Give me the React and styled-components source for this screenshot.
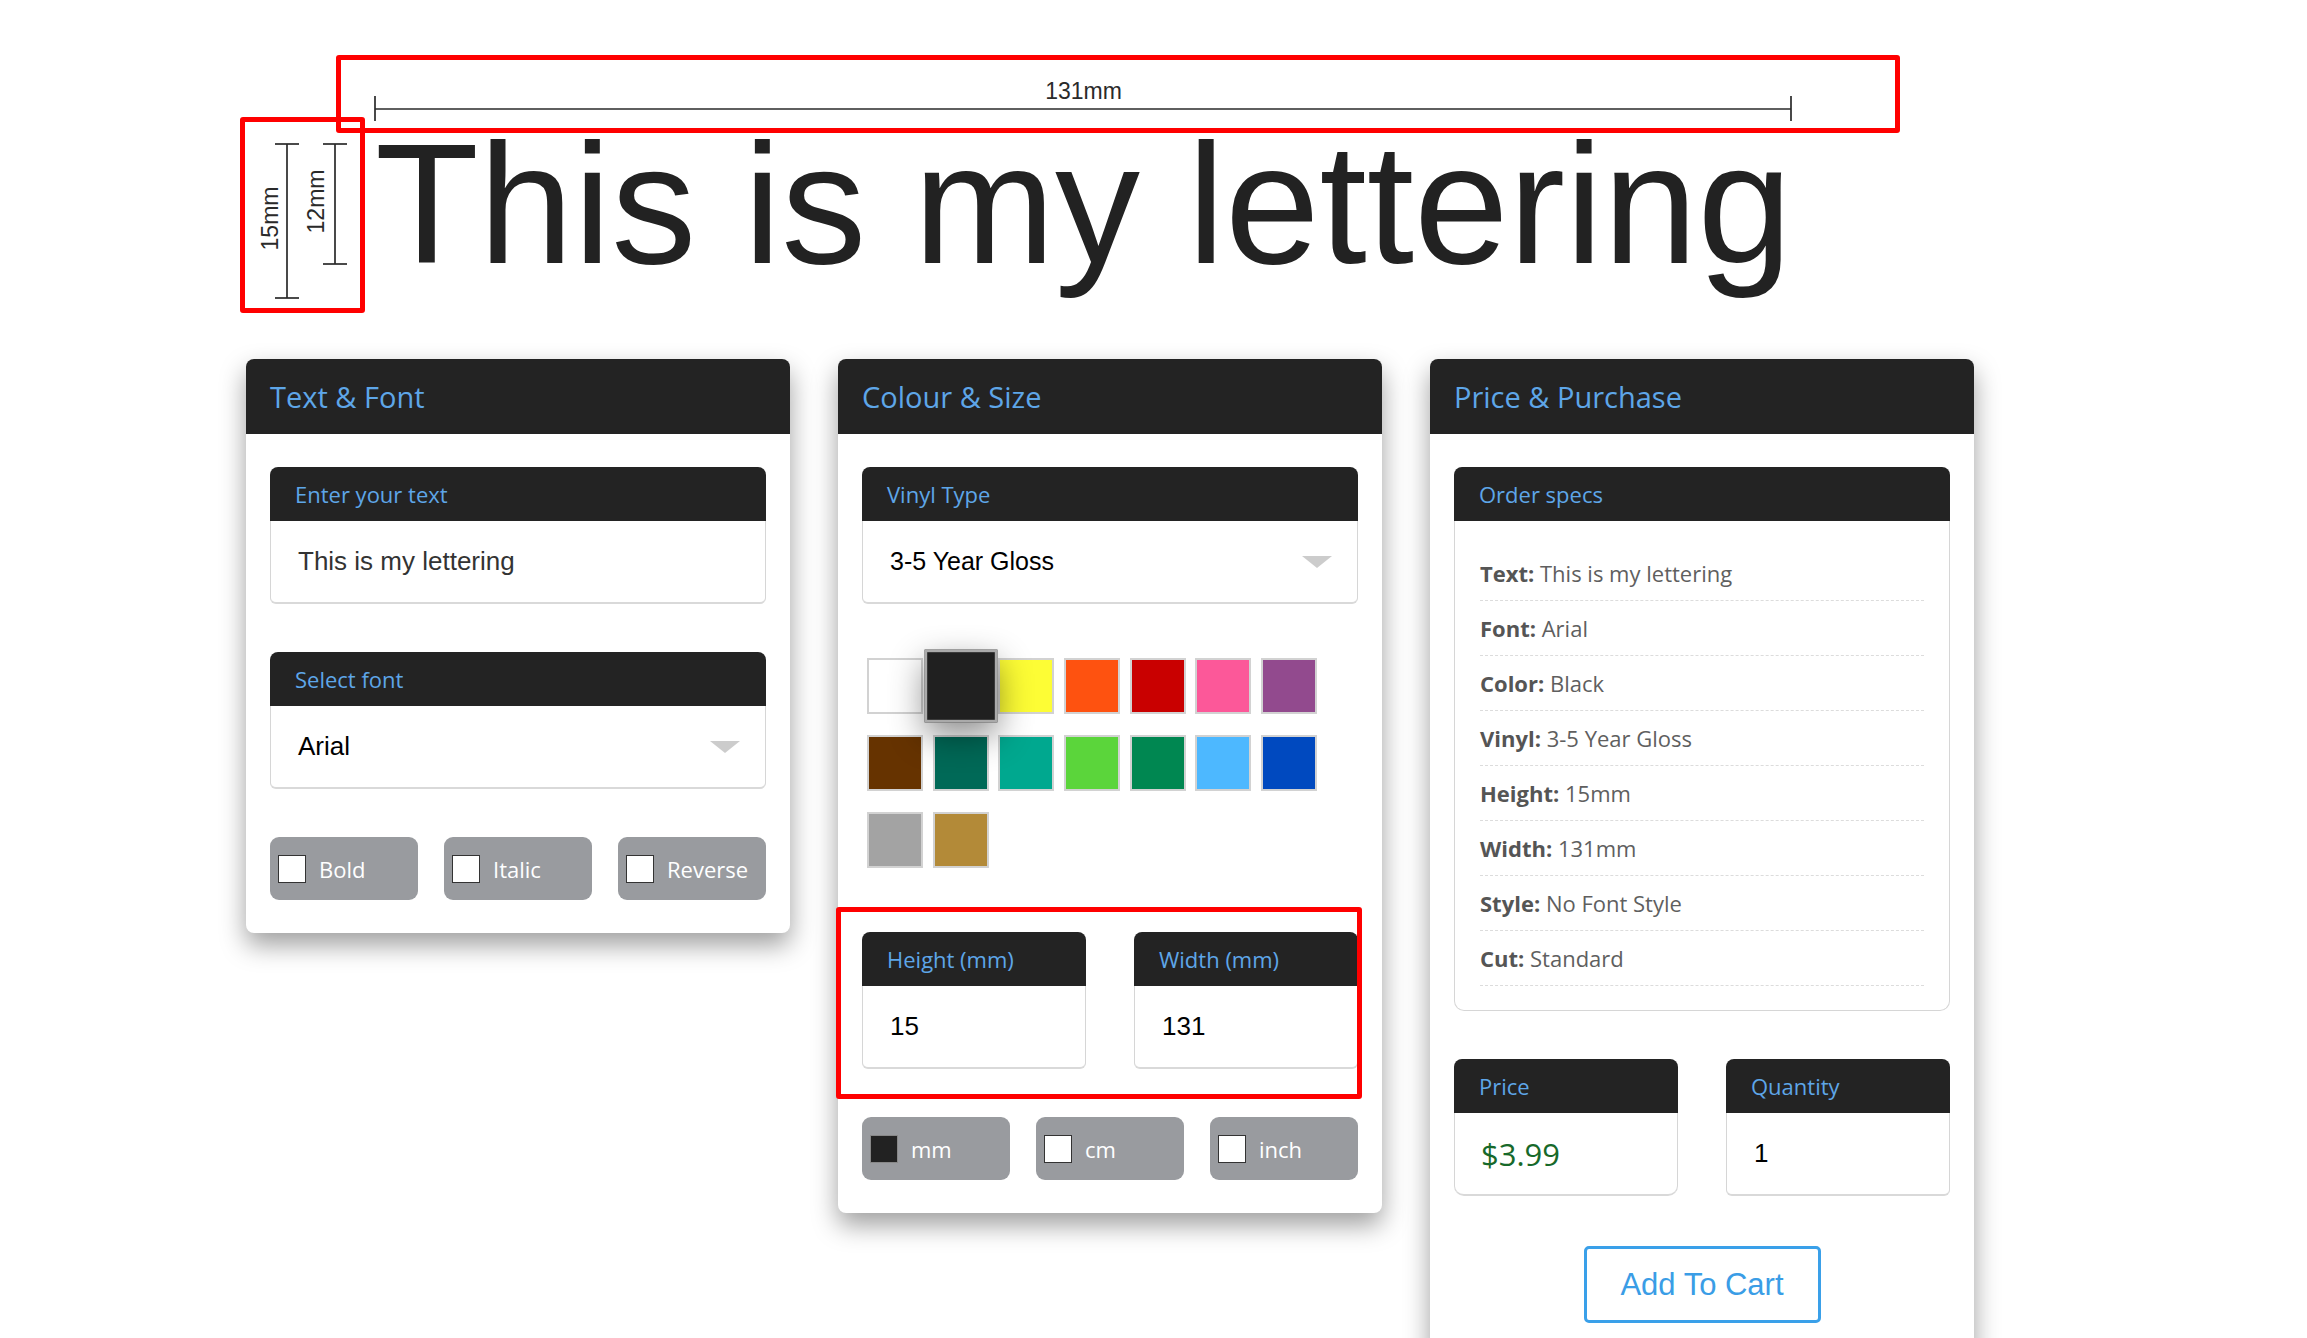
import React from "react";
import styled, { createGlobalStyle } from "styled-components";

const GlobalStyle = createGlobalStyle`
  html, body { margin: 0; padding: 0; background: #fff; }
  body { font-family: "Open Sans", "Liberation Sans", sans-serif; }
  * { box-sizing: border-box; }
`;

const BLUE = "#5ea6e8";
const DARK = "#232323";

const Page = styled.main`
  width: 100%;
  min-height: 1338px;
  background: #fff;
`;

const Preview = styled.section`
  position: relative;
  height: 359px;
  display: flex;
  align-items: flex-start;
  padding: 70px 0 0 254px;
`;

const HeightRulers = styled.svg`
  flex: none;
  display: block;
  margin-top: 49px;
  width: 120px;
  height: 180px;
  overflow: visible;
`;

const PreviewMain = styled.div`
  display: flex;
  flex-direction: column;
`;

const WidthRuler = styled.svg`
  display: block;
  width: 1420px;
  height: 49px;
  overflow: visible;
`;

const Lettering = styled.div`
  margin-left: 1px;
  font-family: "Liberation Sans", Arial, sans-serif;
  font-size: 170px;
  line-height: 170px;
  height: 170px;
  color: #222;
  white-space: nowrap;
`;

const Annotation = styled.div`
  position: absolute;
  left: ${(p) => p.$left}px;
  top: ${(p) => p.$top}px;
  width: ${(p) => p.$w}px;
  height: ${(p) => p.$h}px;
  border: 5px solid #ff0000;
  border-radius: 3px;
  pointer-events: none;
`;

const PanelRow = styled.div`
  display: flex;
  align-items: flex-start;
  gap: 48px;
  padding-left: 246px;
`;

const Panel = styled.section`
  flex: none;
  width: 544px;
  background: #fff;
  border-radius: 8px;
  box-shadow: 0 12px 26px rgba(0, 0, 0, 0.38);
`;

const PanelHeader = styled.h2`
  margin: 0;
  height: 75px;
  display: flex;
  align-items: center;
  padding-left: 24px;
  background: ${DARK};
  border-radius: 8px 8px 0 0;
  color: ${BLUE};
  font-family: "Open Sans", sans-serif;
  font-weight: 400;
  font-size: 29px;
`;

const PanelBody = styled.div`
  display: flex;
  flex-direction: column;
  gap: 48px;
  padding: 33px 24px 33px;
`;

const Field = styled.div`
  display: flex;
  flex-direction: column;
`;

const FieldHeader = styled.div`
  height: 54px;
  display: flex;
  align-items: center;
  padding-left: 25px;
  background: ${DARK};
  border-radius: 8px 8px 0 0;
  color: ${BLUE};
  font-family: "Open Sans", sans-serif;
  font-size: 22px;
`;

const FieldBody = styled.div`
  height: 83px;
  display: flex;
  align-items: center;
  justify-content: space-between;
  padding: 0 25px 0 ${(p) => (p.$price ? 26 : 27)}px;
  border: 1px solid #d6d6d6;
  border-bottom: 2px solid #d9d9d9;
  border-top: none;
  border-radius: 0 0 ${(p) => (p.$price ? 10 : 6)}px ${(p) => (p.$price ? 10 : 6)}px;
  font-family: ${(p) =>
    p.$price ? '"Open Sans", sans-serif' : '"Liberation Sans", Arial, sans-serif'};
  font-size: ${(p) => (p.$price ? 31 : p.$size || 26)}px;
  color: ${(p) => (p.$price ? "#17692a" : p.$muted ? "#333" : "#000")};
`;

const Caret = styled.span`
  width: 0;
  height: 0;
  border-left: 15px solid transparent;
  border-right: 15px solid transparent;
  border-top: 12px solid #cccccc;
`;

const ToggleRow = styled.div`
  display: grid;
  grid-template-columns: repeat(3, 1fr);
  column-gap: 26px;
`;

const Toggle = styled.label`
  height: 63px;
  display: flex;
  align-items: center;
  gap: 13px;
  padding-left: 8px;
  background: #999b9f;
  border-radius: 9px;
  color: #fff;
  font-family: "Open Sans", sans-serif;
  font-size: 22px;
`;

const Box = styled.span`
  flex: none;
  width: 28px;
  height: 28px;
  background: ${(p) => (p.$checked ? "#222" : "#fff")};
  border: 1px solid ${(p) => (p.$checked ? "#888" : "#333")};
`;

const SwatchGrid = styled.div`
  display: grid;
  grid-template-columns: repeat(7, 56px);
  column-gap: 9.7px;
  row-gap: 21px;
  padding: 6px 0 16px 5px;
`;

const Swatch = styled.div`
  position: relative;
  width: 56px;
  height: 56px;
  background: ${(p) => p.$color};
  border: 2px solid ${(p) => (p.$selected ? "#aaaaaa" : "#d2d2d2")};
  ${(p) =>
    p.$selected &&
    `
    transform: scale(1.3);
    z-index: 1;
    box-shadow: 0 10px 26px rgba(0,0,0,0.45);
  `}
`;

const PairRow = styled.div`
  position: relative;
  display: grid;
  grid-template-columns: 1fr 1fr;
  column-gap: 48px;
`;

const SizeAnnotation = styled.div`
  position: absolute;
  left: -26px;
  right: -4px;
  top: -25px;
  bottom: -30px;
  border: 5px solid #ff0000;
  border-radius: 3px;
  pointer-events: none;
`;

const SpecBody = styled.div`
  padding: 25px 25px 24px;
  border: 1px solid #d6d6d6;
  border-top: none;
  border-radius: 0 0 10px 10px;
`;

const SpecRow = styled.div`
  padding: 12px 0 11px;
  border-bottom: 1px dashed #dcdcdc;
  font-family: "Open Sans", sans-serif;
  font-size: 22px;
  line-height: 31px;
  color: #5f5f5f;

  b {
    font-weight: 700;
    color: #555;
  }
`;

const CartButton = styled.button`
  align-self: center;
  width: 237px;
  height: 77px;
  margin-top: 2px;
  background: #fff;
  border: 3px solid #3aa0e9;
  border-radius: 5px;
  color: #3a9de6;
  font-family: "Liberation Sans", Arial, sans-serif;
  font-size: 31px;
`;

const swatches = [
  "#ffffff", "#202020", "#fdfd35", "#fe5210", "#c90000", "#fc5899", "#924a8e",
  "#663300", "#006957", "#00a88f", "#5bd53b", "#008751", "#4db8ff", "#0049bf",
  "#a3a3a3", "#b38a38",
];

const specs = [
  ["Text:", "This is my lettering"],
  ["Font:", "Arial"],
  ["Color:", "Black"],
  ["Vinyl:", "3-5 Year Gloss"],
  ["Height:", "15mm"],
  ["Width:", "131mm"],
  ["Style:", "No Font Style"],
  ["Cut:", "Standard"],
];

function Check({ label, checked }) {
  return (
    <Toggle>
      <Box $checked={checked} />
      {label}
    </Toggle>
  );
}

export default function App() {
  const stroke = { stroke: "#2a2a2a", strokeWidth: 1.7 };
  const label = {
    textAnchor: "middle",
    fontFamily: "Liberation Sans, Arial, sans-serif",
    fontSize: 23,
    fill: "#2a2a2a",
  };
  return (
    <Page>
      <GlobalStyle />
      <Preview>
        <HeightRulers viewBox="0 0 120 180">
          <line x1="33" y1="25" x2="33" y2="179" {...stroke} />
          <line x1="21" y1="25" x2="45" y2="25" {...stroke} />
          <line x1="21" y1="179" x2="45" y2="179" {...stroke} />
          <line x1="81" y1="25" x2="81" y2="145" {...stroke} />
          <line x1="69" y1="25" x2="93" y2="25" {...stroke} />
          <line x1="69" y1="145" x2="93" y2="145" {...stroke} />
          <text transform="translate(23.5 99.5) rotate(-90)" {...label}>
            15mm
          </text>
          <text transform="translate(70 82.5) rotate(-90)" {...label}>
            12mm
          </text>
        </HeightRulers>
        <PreviewMain>
          <WidthRuler viewBox="0 0 1420 49">
            <line x1="1" y1="39" x2="1417" y2="39" {...stroke} />
            <line x1="1" y1="26" x2="1" y2="51" {...stroke} />
            <line x1="1417" y1="26" x2="1417" y2="51" {...stroke} />
            <text x="709.5" y="29" {...label}>
              131mm
            </text>
          </WidthRuler>
          <Lettering>This is my lettering</Lettering>
        </PreviewMain>
        <Annotation $left={336} $top={55} $w={1564} $h={78} />
        <Annotation $left={240} $top={117} $w={125} $h={196} />
      </Preview>

      <PanelRow>
        <Panel>
          <PanelHeader>Text &amp; Font</PanelHeader>
          <PanelBody>
            <Field>
              <FieldHeader>Enter your text</FieldHeader>
              <FieldBody $muted>This is my lettering</FieldBody>
            </Field>
            <Field>
              <FieldHeader>Select font</FieldHeader>
              <FieldBody>
                Arial
                <Caret />
              </FieldBody>
            </Field>
            <ToggleRow>
              <Check label="Bold" />
              <Check label="Italic" />
              <Check label="Reverse" />
            </ToggleRow>
          </PanelBody>
        </Panel>

        <Panel>
          <PanelHeader>Colour &amp; Size</PanelHeader>
          <PanelBody>
            <Field>
              <FieldHeader>Vinyl Type</FieldHeader>
              <FieldBody $size={25}>
                3-5 Year Gloss
                <Caret />
              </FieldBody>
            </Field>
            <SwatchGrid>
              {swatches.map((c, i) => (
                <Swatch key={c} $color={c} $selected={i === 1} />
              ))}
            </SwatchGrid>
            <PairRow>
              <Field>
                <FieldHeader>Height (mm)</FieldHeader>
                <FieldBody>15</FieldBody>
              </Field>
              <Field>
                <FieldHeader>Width (mm)</FieldHeader>
                <FieldBody>131</FieldBody>
              </Field>
              <SizeAnnotation />
            </PairRow>
            <ToggleRow>
              <Check label="mm" checked />
              <Check label="cm" />
              <Check label="inch" />
            </ToggleRow>
          </PanelBody>
        </Panel>

        <Panel>
          <PanelHeader>Price &amp; Purchase</PanelHeader>
          <PanelBody>
            <Field>
              <FieldHeader>Order specs</FieldHeader>
              <SpecBody>
                {specs.map(([k, v]) => (
                  <SpecRow key={k}>
                    <b>{k}</b> {v}
                  </SpecRow>
                ))}
              </SpecBody>
            </Field>
            <PairRow>
              <Field>
                <FieldHeader>Price</FieldHeader>
                <FieldBody $price>$3.99</FieldBody>
              </Field>
              <Field>
                <FieldHeader>Quantity</FieldHeader>
                <FieldBody>1</FieldBody>
              </Field>
            </PairRow>
            <CartButton>Add To Cart</CartButton>
          </PanelBody>
        </Panel>
      </PanelRow>
    </Page>
  );
}
